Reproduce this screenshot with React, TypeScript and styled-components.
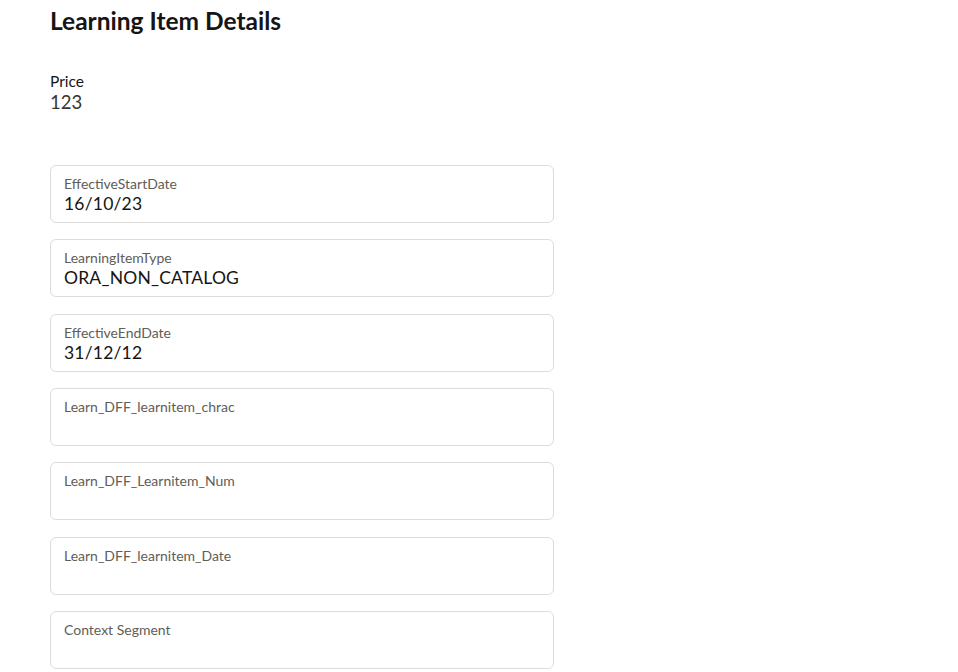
import * as React from 'react';
import styled, { createGlobalStyle } from 'styled-components';

const GlobalStyle = createGlobalStyle`
	body {
		margin: 0;
		background: #ffffff;
		font-family: 'Lato', 'Noto Sans', Arial, sans-serif;
		color: #161513;
	}
`;

interface Field {
	label: string;
	value?: string;
}

const fields: Field[] = [
	{ label: 'EffectiveStartDate', value: '16/10/23' },
	{ label: 'LearningItemType', value: 'ORA_NON_CATALOG' },
	{ label: 'EffectiveEndDate', value: '31/12/12' },
	{ label: 'Learn_DFF_learnitem_chrac' },
	{ label: 'Learn_DFF_Learnitem_Num' },
	{ label: 'Learn_DFF_learnitem_Date' },
	{ label: 'Context Segment' },
];

const Page = styled.div`
	padding: 5px 0 0 50px;
	width: 504px;
`;

const Title = styled.h1`
	margin: 0;
	font-size: 24.5px;
	font-weight: 700;
	line-height: 32px;
	color: #161513;
`;

const ReadOnly = styled.div`
	margin-top: 34px;
	display: flex;
	flex-direction: column;
`;

const PlainLabel = styled.span`
	font-size: 15.5px;
	line-height: 20px;
	color: #161513;
`;

const PlainValue = styled.span`
	font-size: 18.5px;
	line-height: 22px;
	color: #3a3631;
`;

const FieldList = styled.div`
	margin-top: 52px;
	display: flex;
	flex-direction: column;
	gap: 16.33px;
`;

const FieldBox = styled.div`
	box-sizing: border-box;
	height: 58px;
	border: 1px solid #dedcda;
	border-radius: 6px;
	padding: 9px 13px 0;
	display: flex;
	flex-direction: column;
`;

const BoxLabel = styled.span`
	font-size: 14px;
	line-height: 17px;
	color: #615d58;
`;

const BoxValue = styled.span`
	font-size: 17.5px;
	line-height: 23px;
	letter-spacing: 0.2px;
	color: #161513;
`;

export default function App() {
	return (
		<>
			<GlobalStyle />
			<Page>
				<Title>Learning Item Details</Title>
				<ReadOnly>
					<PlainLabel>Price</PlainLabel>
					<PlainValue>123</PlainValue>
				</ReadOnly>
				<FieldList>
					{fields.map(field => (
						<FieldBox key={field.label}>
							<BoxLabel>{field.label}</BoxLabel>
							{field.value && <BoxValue>{field.value}</BoxValue>}
						</FieldBox>
					))}
				</FieldList>
			</Page>
		</>
	);
}
